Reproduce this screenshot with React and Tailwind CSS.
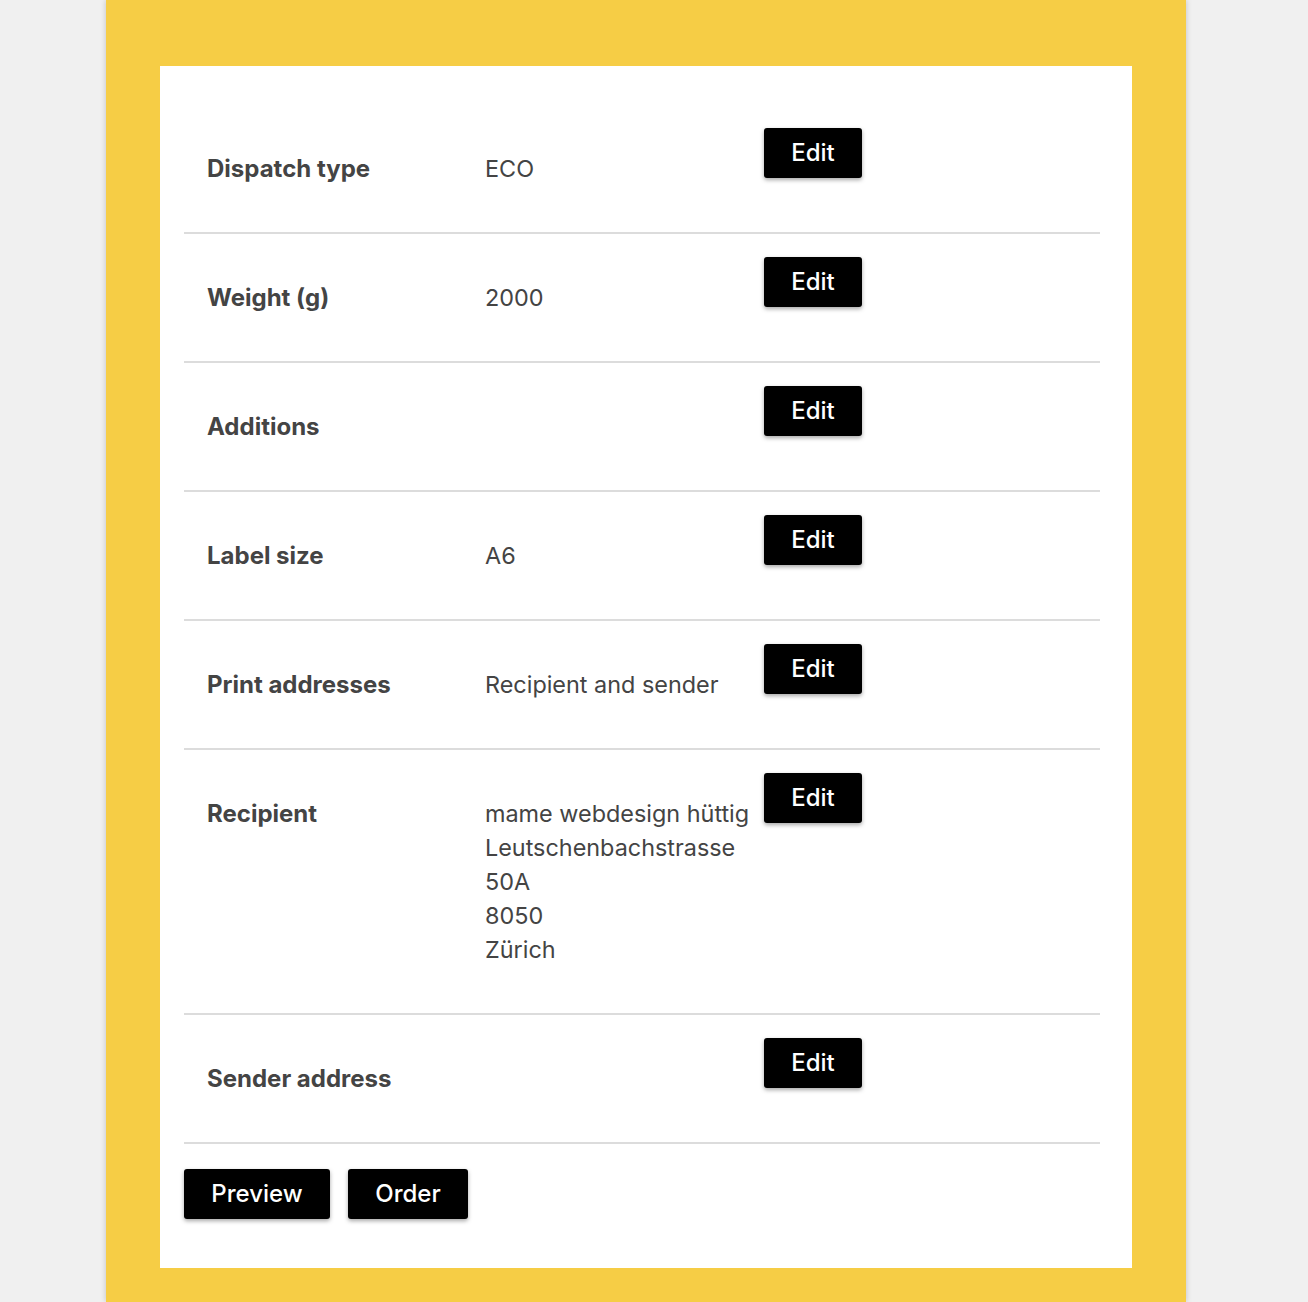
const rows = [
  { label: 'Dispatch type', value: ['ECO'] },
  { label: 'Weight (g)', value: ['2000'] },
  { label: 'Additions', value: [] },
  { label: 'Label size', value: ['A6'] },
  { label: 'Print addresses', value: ['Recipient and sender'] },
  { label: 'Recipient', value: ['mame webdesign hüttig', 'Leutschenbachstrasse', '50A', '8050', 'Zürich'] },
  { label: 'Sender address', value: [] },
]

function Button({ children, className = '' }) {
  return (
    <button
      className={`h-[50px] rounded-[3px] bg-black text-[24px] leading-none font-medium text-white shadow-[0_2px_4px_rgba(0,0,0,0.35)] ${className}`}
    >
      {children}
    </button>
  )
}

function Row({ label, value }) {
  return (
    <div className="flex items-start border-b-2 border-[#dcdcdc] px-[23px]">
      <div className="w-[278px] pt-[47px] pb-[46px] text-[24px] leading-[34px] font-bold text-[#444]">
        {label}
      </div>
      <div className="flex w-[279px] flex-col pt-[47px] pb-[46px] text-[23.4px] leading-[34px] text-[#444]">
        {value.length ? value.map((v) => <span key={v} className="whitespace-nowrap">{v}</span>) : <span>&nbsp;</span>}
      </div>
      <div className="pt-[23px]">
        <Button className="w-[98px]">Edit</Button>
      </div>
    </div>
  )
}

export default function App() {
  return (
    <div className="min-h-[1302px] bg-[#f0f0f0] font-['Inter',sans-serif]">
      <div className="ml-[106px] min-h-[1302px] w-[1080px] bg-[#f6cd45] px-[54px] pt-[66px] shadow-[0_0_6px_rgba(0,0,0,0.2)]">
        <div className="bg-white pt-[39px] pr-[32px] pb-[49px] pl-[24px]">
          {rows.map((r) => (
            <Row key={r.label} {...r} />
          ))}
          <div className="flex gap-[18px] pt-[25px]">
            <Button className="w-[146px]">Preview</Button>
            <Button className="w-[120px]">Order</Button>
          </div>
        </div>
      </div>
    </div>
  )
}
